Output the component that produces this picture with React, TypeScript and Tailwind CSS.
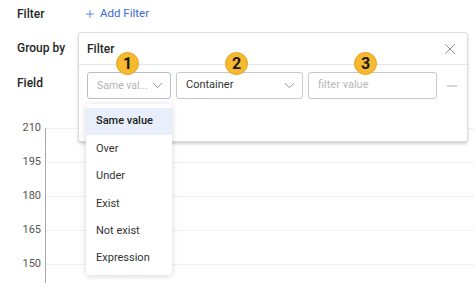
import { ChevronDown, Plus, X, Minus } from "lucide-react";

const ticks = ["210", "195", "180", "165", "150"];
const options = ["Same value", "Over", "Under", "Exist", "Not exist", "Expression"];

function Badge({ n, className }: { n: number; className: string }) {
  return (
    <div
      className={`absolute top-[52px] z-10 flex h-[23px] w-[23px] items-center justify-center rounded-full border border-[#e3a41c] bg-[#f6b92f] text-[16px] font-bold leading-none text-[#1a1a1a] ${className}`}
    >
      {n}
    </div>
  );
}

export default function App() {
  return (
    <div className="relative h-[283px] w-[474px] overflow-hidden bg-white font-['Roboto',sans-serif] text-[#262626]">
      {/* Left labels */}
      <div className="flex flex-col pl-[17px] text-[12px] font-medium">
        <div className="flex h-[28px] items-center">
          <span className="w-[67px]">Filter</span>
          <span className="flex items-center gap-[4px] text-[11.5px] font-normal text-[#3d6ad6]">
            <Plus size={12} strokeWidth={1.6} />
            Add Filter
          </span>
        </div>
        <div className="flex h-[40px] items-center">Group by</div>
        <div className="flex h-[30px] items-center">Field</div>
      </div>

      {/* Chart */}
      <div className="mt-[13px] flex">
        <div className="flex w-[41px] flex-col">
          {ticks.map((t) => (
            <div key={t} className="flex h-[34px] items-center justify-end text-[11px] text-[#555]">
              {t}
            </div>
          ))}
        </div>
        <div className="ml-[4px] mt-[17px] flex-1 border-l border-[#a8a8a8]">
          {ticks.map((t) => (
            <div key={t} className="h-[34px] border-t border-[#f0f0f0]" />
          ))}
        </div>
      </div>

      {/* Filter popover */}
      <div className="absolute left-[78px] top-[32px] h-[110px] w-[390px] rounded-[3px] border border-[#dcdcdc] bg-white shadow-[0_2px_3px_rgba(0,0,0,0.18)]">
        <div className="flex h-[32px] items-center justify-between border-b border-[#e6e6e6] pl-[8px] pr-[8px]">
          <span className="text-[12px] font-medium">Filter</span>
          <X size={18} strokeWidth={1.1} className="text-[#777]" />
        </div>
        <div className="flex items-center gap-[5px] pl-[8px] pt-[7px]">
          <div className="flex h-[27px] w-[84px] items-center justify-between whitespace-nowrap rounded-[3px] border border-[#b4bcd6] pl-[9px] pr-[4px] text-[10.5px] text-[#b3b3b3]">
            <span>Same val...</span>
            <ChevronDown size={17} strokeWidth={1.1} className="text-[#777]" />
          </div>
          <div className="flex h-[27px] w-[127px] items-center justify-between whitespace-nowrap rounded-[3px] border border-[#c8c8c8] pl-[9px] pr-[4px] text-[11px] text-[#333]">
            <span>Container</span>
            <ChevronDown size={17} strokeWidth={1.1} className="text-[#777]" />
          </div>
          <div className="flex h-[27px] w-[129px] items-center whitespace-nowrap rounded-[3px] border border-[#c8c8c8] pl-[9px] text-[11px] text-[#b8b8b8]">
            filter value
          </div>
          <Minus size={16} strokeWidth={1.2} className="ml-[2px] text-[#999]" />
        </div>
      </div>

      <Badge n={1} className="left-[116px]" />
      <Badge n={2} className="left-[225px]" />
      <Badge n={3} className="left-[354px]" />

      {/* Dropdown menu */}
      <div className="absolute left-[86px] top-[104px] z-20 w-[86px] rounded-[4px] bg-white pb-[3px] pt-[4px] shadow-[0_1px_6px_rgba(0,0,0,0.16)]">
        {options.map((o, i) => (
          <div
            key={o}
            className={`flex h-[27.4px] items-center pl-[10px] text-[11px] ${
              i === 0 ? "bg-[#e9eefb] font-medium text-[#222]" : "text-[#333]"
            }`}
          >
            {o}
          </div>
        ))}
      </div>
    </div>
  );
}
